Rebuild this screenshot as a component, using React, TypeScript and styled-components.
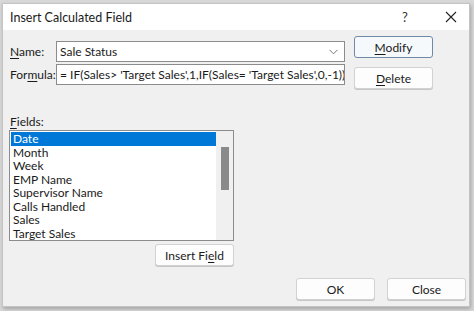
import React from 'react';
import styled, { createGlobalStyle } from 'styled-components';

const GlobalStyle = createGlobalStyle`
  html, body {
    margin: 0;
    padding: 0;
    background: #d9d9d9;
    width: 474px;
    height: 311px;
    overflow: hidden;
  }
  body {
    font-family: Lato, "Open Sans", sans-serif;
    font-size: 12px;
    color: #1a1a1a;
  }
`;

const Dialog = styled.div`
  margin: 3px 0 0 2px;
  width: 468px;
  height: 304px;
  background: #f0f0f0;
  border: 1px solid #c4c4c4;
  box-sizing: border-box;
  box-shadow: 1px 2px 4px rgba(0, 0, 0, 0.25);
  display: flex;
  flex-direction: column;
`;

const TitleBar = styled.div`
  height: 26px;
  background: #ffffff;
  display: flex;
  align-items: center;
  padding: 0 3px 0 7px;
  gap: 16px;
  font-size: 12.5px;
`;

const Title = styled.div`
  flex: 1;
`;

const TitleIcon = styled.div`
  width: 30px;
  height: 26px;
  display: flex;
  align-items: center;
  justify-content: center;
  color: #333;
  font-size: 13px;
`;

const Body = styled.div`
  flex: 1;
  padding: 6px 3px 0 6px;
  display: flex;
  flex-direction: column;
`;

const TopRow = styled.div`
  display: flex;
  gap: 9px;
`;

const FormGrid = styled.div`
  margin-top: 5px;
  display: grid;
  grid-template-columns: 47px 289px;
  grid-auto-rows: 21px;
  row-gap: 2px;
  align-items: center;
`;

const Label = styled.label`
  padding-left: 1px;
`;

const Key = styled.span`
  text-decoration: underline;
  text-underline-offset: 2px;
`;

const Input = styled.div`
  height: 21px;
  box-sizing: border-box;
  background: #fff;
  border: 1px solid #8c8c8c;
  display: flex;
  align-items: center;
  padding: 0 6px 0 3px;
  white-space: nowrap;
  overflow: hidden;
`;

const InputText = styled.span`
  flex: 1;
`;

const Caret = styled.span`
  display: inline-block;
  width: 1px;
  height: 14px;
  background: #000;
  vertical-align: middle;
  margin-left: 1px;
`;

const ButtonCol = styled.div`
  display: flex;
  flex-direction: column;
  gap: 9px;
`;

const Button = styled.button<{ $primary?: boolean }>`
  width: 79px;
  height: 22px;
  box-sizing: border-box;
  border-radius: 3px;
  border: 1px solid ${(p) => (p.$primary ? '#6f8aa6' : '#d2d2d2')};
  background: ${(p) => (p.$primary ? '#f6f9fc' : '#fdfdfd')};
  font-family: inherit;
  font-size: 12px;
  color: #1a1a1a;
  padding: 0;
  box-shadow: ${(p) => (p.$primary ? 'none' : '0 1px 0 #c6c6c6')};
`;

const FieldsLabel = styled.div`
  margin-top: 25px;
  padding-left: 1px;
  height: 16px;
  line-height: 16px;
`;

const FieldsArea = styled.div`
  display: flex;
  flex-direction: column;
  align-items: flex-end;
  width: 225px;
  gap: 3px;
`;

const ListBox = styled.div`
  width: 225px;
  height: 111px;
  box-sizing: border-box;
  border: 1px solid #8c8c8c;
  background: #fff;
  display: flex;
`;

const Items = styled.div`
  flex: 1;
  padding: 1px 0 0 1px;
`;

const Item = styled.div<{ $selected?: boolean }>`
  height: 13.5px;
  line-height: 13.5px;
  padding-left: 2px;
  background: ${(p) => (p.$selected ? '#0078d7' : 'transparent')};
  color: ${(p) => (p.$selected ? '#fff' : '#1a1a1a')};
  white-space: nowrap;
`;

const ScrollTrack = styled.div`
  width: 17px;
  background: #f0f0f0;
  display: flex;
  justify-content: center;
  padding-top: 16px;
`;

const ScrollThumb = styled.div`
  width: 8px;
  height: 43px;
  background: #8a8a8a;
`;

const Footer = styled.div`
  margin-top: 12px;
  display: flex;
  justify-content: flex-end;
  gap: 12px;
`;

const fields = [
  'Date',
  'Month',
  'Week',
  'EMP Name',
  'Supervisor Name',
  'Calls Handled',
  'Sales',
  'Target Sales',
];

export default function App() {
  return (
    <>
      <GlobalStyle />
      <Dialog>
        <TitleBar>
          <Title>Insert Calculated Field</Title>
          <TitleIcon>?</TitleIcon>
          <TitleIcon>
            <svg width="12" height="12" viewBox="0 0 12 12">
              <path d="M1 1 L11 11 M11 1 L1 11" stroke="#222" strokeWidth="1.1" />
            </svg>
          </TitleIcon>
        </TitleBar>
        <Body>
          <TopRow>
            <FormGrid>
              <Label><Key>N</Key>ame:</Label>
              <Input>
                <InputText>Sale Status</InputText>
                <svg width="9" height="6" viewBox="0 0 9 6">
                  <path d="M0.5 0.8 L4.5 4.8 L8.5 0.8" fill="none" stroke="#777" strokeWidth="1" />
                </svg>
              </Input>
              <Label>For<Key>m</Key>ula:</Label>
              <Input>
                <span>
                  = IF(Sales&gt; 'Target Sales',1,IF(Sales= 'Target Sales',0,-1))
                  <Caret />
                </span>
              </Input>
            </FormGrid>
            <ButtonCol>
              <Button $primary><Key>M</Key>odify</Button>
              <Button><Key>D</Key>elete</Button>
            </ButtonCol>
          </TopRow>
          <FieldsLabel><Key>F</Key>ields:</FieldsLabel>
          <FieldsArea>
            <ListBox>
              <Items>
                {fields.map((f, i) => (
                  <Item key={f} $selected={i === 0}>{f}</Item>
                ))}
              </Items>
              <ScrollTrack>
                <ScrollThumb />
              </ScrollTrack>
            </ListBox>
            <Button>Insert Fi<Key>e</Key>ld</Button>
          </FieldsArea>
          <Footer>
            <Button>OK</Button>
            <Button>Close</Button>
          </Footer>
        </Body>
      </Dialog>
    </>
  );
}
